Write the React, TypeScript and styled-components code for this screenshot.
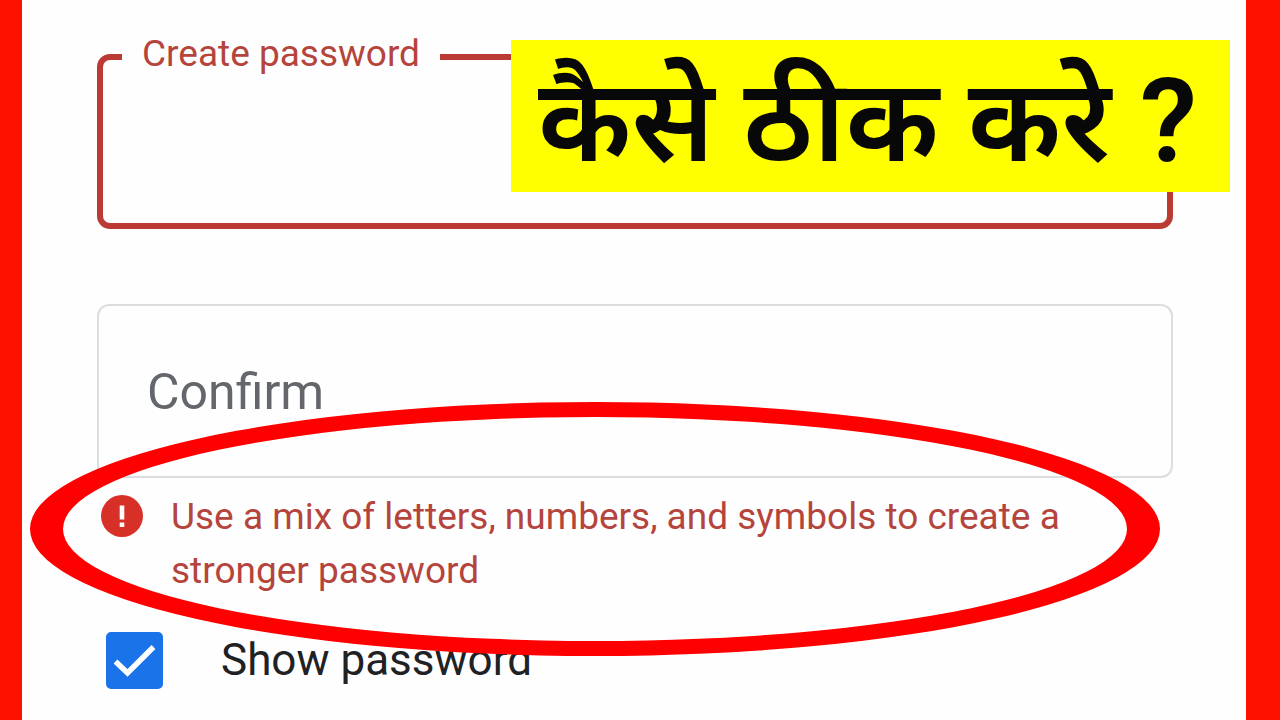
import React, { useState } from "react";
import styled, { createGlobalStyle } from "styled-components";

const GlobalStyle = createGlobalStyle`
  *, *::before, *::after { box-sizing: border-box; }
  html, body, #root { height: 100%; }
  body {
    margin: 0;
    background: #ffffff;
    font-family: Roboto, "Liberation Sans", sans-serif;
    overflow: hidden;
  }
`;

const Page = styled.main`
  position: relative;
  min-height: 100%;
  padding: 34px 73px 0 75px;
  border: solid #ff1100;
  border-width: 0 34px 0 22px;
  background: #fefefe;
  overflow: hidden;
`;

const Form = styled.form`
  display: flex;
  flex-direction: column;
`;

const PasswordField = styled.fieldset`
  display: flex;
  min-width: 0;
  height: 195px;
  margin: 0 0 75px;
  padding: 0 24px;
  border: 6px solid #bb3a34;
  border-radius: 13px;
`;

const PasswordLegend = styled.legend`
  margin-left: -5px;
  padding: 0 20px 6px;
  color: #b5443c;
  font-size: 37px;
  line-height: 40px;
`;

const TextInput = styled.input`
  flex: 1;
  min-width: 0;
  border: 0;
  outline: 0;
  padding: 0;
  background: transparent;
  color: #202124;
  font: inherit;
  font-size: 48px;
`;

const ConfirmField = styled.label`
  display: flex;
  align-items: center;
  gap: 24px;
  height: 174px;
  padding: 2px 48px 0;
  border: 2px solid #dcdddf;
  border-radius: 12px;
  color: #63676c;
  font-size: 50px;
`;

const ErrorMessage = styled.div`
  position: relative;
  display: flex;
  align-items: flex-start;
  gap: 28px;
  padding: 12px 60px 0 4px;
`;

const ErrorIcon = styled.svg`
  flex: none;
  width: 42px;
  height: 54px;
`;

const ErrorText = styled.p`
  margin: 0;
  color: #b5443c;
  font-size: 37px;
  line-height: 54px;
`;

const Ring = styled.svg`
  position: absolute;
  top: -76px;
  left: -67px;
  width: calc(100% + 54px);
  height: 254px;
  pointer-events: none;
  z-index: 1;
`;

const ShowPassword = styled.label`
  display: flex;
  align-items: center;
  gap: 58px;
  margin-top: 34px;
  padding-left: 9px;
  color: #202124;
  font-size: 44px;
  line-height: 57px;
`;

const CheckWrap = styled.span`
  display: grid;
  width: 57px;
  height: 57px;

  & > * { grid-area: 1 / 1; }
`;

const Checkbox = styled.input`
  appearance: none;
  width: 100%;
  height: 100%;
  margin: 0;
  border: 5px solid #5f6368;
  border-radius: 5px;

  &:checked {
    border-color: #1a73e8;
    background: #1a73e8;
  }
`;

const Tick = styled.svg`
  width: 57px;
  height: 57px;
  pointer-events: none;
`;

const Banner = styled.h1`
  position: absolute;
  top: 40px;
  right: 16px;
  margin: 0;
  padding: 10px 33px 0 27px;
  background: #ffff00;
  color: #080808;
  font-family: Roboto, "Noto Sans Devanagari", "Noto Sans", sans-serif;
  font-size: 116px;
  font-weight: 600;
  line-height: 142px;
  white-space: nowrap;
`;

export default function App() {
  const [shown, setShown] = useState(true);
  const type = shown ? "text" : "password";

  return (
    <>
      <GlobalStyle />
      <Page>
        <Form>
          <PasswordField>
            <PasswordLegend>
              <label htmlFor="create">Create password</label>
            </PasswordLegend>
            <TextInput id="create" type={type} aria-invalid="true" aria-describedby="hint" />
          </PasswordField>
          <ConfirmField htmlFor="confirm">
            Confirm
            <TextInput id="confirm" type={type} />
          </ConfirmField>
          <ErrorMessage>
            <ErrorIcon viewBox="0 0 42 54" aria-hidden="true">
              <circle cx="21" cy="26" r="21" fill="#d63027" />
              <path d="M18.7 15.5h4.6v14h-4.6zM18.7 32.5h4.6v4.6h-4.6z" fill="#fff" />
            </ErrorIcon>
            <ErrorText id="hint">
              Use a mix of letters, numbers, and symbols to create a stronger password
            </ErrorText>
            <Ring viewBox="0 0 1130 254" preserveAspectRatio="none" aria-hidden="true">
              <path
                fill="#ff0000"
                fillRule="evenodd"
                d="M0 127A565 127 0 0 1 1130 127A565 127 0 0 1 0 127ZM33 127A532 112 0 0 0 1097 127A532 112 0 0 0 33 127Z"
              />
            </Ring>
          </ErrorMessage>
          <ShowPassword>
            <CheckWrap>
              <Checkbox
                type="checkbox"
                checked={shown}
                onChange={(event) => setShown(event.target.checked)}
              />
              {shown && (
                <Tick viewBox="0 0 57 57" aria-hidden="true">
                  <path d="M9.5 29.5l12 11.5L47.5 15" fill="none" stroke="#fff" strokeWidth="5.5" />
                </Tick>
              )}
            </CheckWrap>
            Show password
          </ShowPassword>
        </Form>
        <Banner lang="hi">कैसे ठीक करे ?</Banner>
      </Page>
    </>
  );
}
